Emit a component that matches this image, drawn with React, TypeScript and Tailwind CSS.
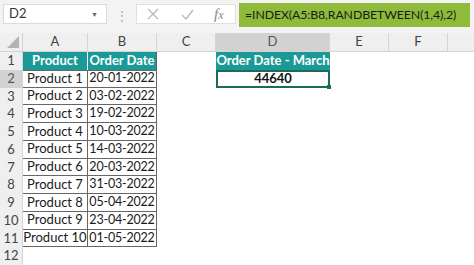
import React from "react";

const W = [23, 65, 69, 59, 114, 59, 59];
const font = { fontFamily: "Lato, sans-serif" };

const products = [
  ["Product 1", "20-01-2022"],
  ["Product 2", "03-02-2022"],
  ["Product 3", "19-02-2022"],
  ["Product 4", "10-03-2022"],
  ["Product 5", "14-03-2022"],
  ["Product 6", "20-03-2022"],
  ["Product 7", "31-03-2022"],
  ["Product 8", "05-04-2022"],
  ["Product 9", "23-04-2022"],
  ["Product 10", "01-05-2022"],
];

function RowHead({ n, sel }: { n: number; sel?: boolean }) {
  return (
    <div
      className={`w-[23px] shrink-0 h-full flex items-center justify-center text-[13px] border-r border-[#d4d4d4] whitespace-nowrap ${
        sel ? "bg-[#d2d2d2] text-[#555]" : "bg-[#efefef] text-[#444]"
      }`}
    >
      {n}
    </div>
  );
}

export default function App() {
  return (
    <div className="w-[474px] h-[265px] bg-white overflow-hidden text-[#1a1a1a]" style={font}>
      {/* formula bar */}
      <div className="h-[33px] bg-[#f3f3f3] flex items-start pt-[3px] relative">
        <div className="ml-[3px] mt-[1px] w-[104px] h-[20px] bg-white border border-[#dadada] flex items-center justify-between pl-[5px] pr-[8px]">
          <span className="text-[13px] text-[#333]">D2</span>
          <span className="text-[7px] text-[#666]">▼</span>
        </div>
        <div className="w-[29px] h-[24px] flex items-center justify-center text-[#b5b5b5] text-[14px]">⋮</div>
        <div className="w-[100px] h-[20px] mt-[1px] bg-white border border-[#e0e0e0] flex items-center">
          <svg width="12" height="12" viewBox="0 0 12 12" className="ml-[10px]">
            <path d="M1 1L11 11M11 1L1 11" stroke="#b8b8b8" strokeWidth="1.3" />
          </svg>
          <svg width="13" height="11" viewBox="0 0 13 11" className="ml-[22px]">
            <path d="M1 6L5 10L12 1" stroke="#b8b8b8" strokeWidth="1.3" fill="none" />
          </svg>
          <span className="ml-[20px] text-[15px] italic text-[#888]" style={{ fontFamily: "'Liberation Serif', serif" }}>
            f<span className="text-[12px]">x</span>
          </span>
        </div>
        <div className="ml-[3px] w-[231px] h-[24px] bg-[#8fbb3b] flex items-center pl-[6px] text-[12.3px] text-[#1a1a1a] whitespace-nowrap tracking-[-0.1px]">
          =INDEX(A5:B8,RANDBETWEEN(1,4),2)
        </div>
      </div>
      {/* column headers */}
      <div className="h-[19px] flex bg-[#efefef] border-b border-[#d4d4d4]">
        <div className="w-[23px] shrink-0 h-full relative border-r border-[#d4d4d4]">
          <svg width="12" height="12" viewBox="0 0 12 12" className="absolute right-[3px] bottom-[3px]">
            <path d="M12 0L12 12L0 12Z" fill="#b3b3b3" />
          </svg>
        </div>
        {["A", "B", "C", "D", "E", "F"].map((c, i) => (
          <div
            key={c}
            style={{ width: W[i + 1] }}
            className={`shrink-0 h-full flex items-center justify-center text-[13px] border-r border-[#d4d4d4] ${
              c === "D" ? "bg-[#d2d2d2] text-[#555]" : "text-[#444]"
            }`}
          >
            {c}
          </div>
        ))}
        <div className="flex-1" />
      </div>
      {/* rows */}
      <div className="flex flex-col">
        {/* row 1 */}
        <div className="h-[17.75px] flex">
          <RowHead n={1} />
          <div className="w-[65px] shrink-0 bg-[#1a9a96] text-white font-bold flex items-center justify-center text-[13px] border-r border-white whitespace-nowrap">
            Product
          </div>
          <div className="w-[69px] shrink-0 bg-[#1a9a96] text-white font-bold flex items-center justify-center text-[13px] border-r border-[#606060] whitespace-nowrap">
            Order Date
          </div>
          <div className="w-[59px] shrink-0" />
          <div className="w-[114px] shrink-0 bg-[#1a9a96] text-white font-bold flex items-center justify-center text-[13px] whitespace-nowrap">
            Order Date - March
          </div>
        </div>
        {products.map(([p, d], i) => (
          <div key={p} className="h-[17.75px] flex">
            <RowHead n={i + 2} sel={i === 0} />
            <div
              className={`w-[65px] shrink-0 flex items-center justify-center text-[13px] border-r border-b border-[#666] whitespace-nowrap ${
                i === 0 ? "border-t" : ""
              }`}
            >
              {p}
            </div>
            <div
              className={`w-[69px] shrink-0 flex items-center justify-center text-[12.5px] tracking-[-0.2px] border-r border-b border-[#666] whitespace-nowrap ${
                i === 0 ? "border-t" : ""
              }`}
            >
              {d}
            </div>
            <div className="w-[59px] shrink-0" />
            {i === 0 ? (
              <div className="w-[114px] shrink-0 relative border-2 border-[#1d6a5a] flex items-center justify-center text-[13px] font-bold text-[#111]">
                44640
                <div className="absolute right-[-3px] bottom-[-3px] w-[4px] h-[4px] bg-[#1d6a5a]" />
              </div>
            ) : null}
          </div>
        ))}
        <div className="h-[17.75px] flex">
          <RowHead n={12} />
        </div>
      </div>
    </div>
  );
}
